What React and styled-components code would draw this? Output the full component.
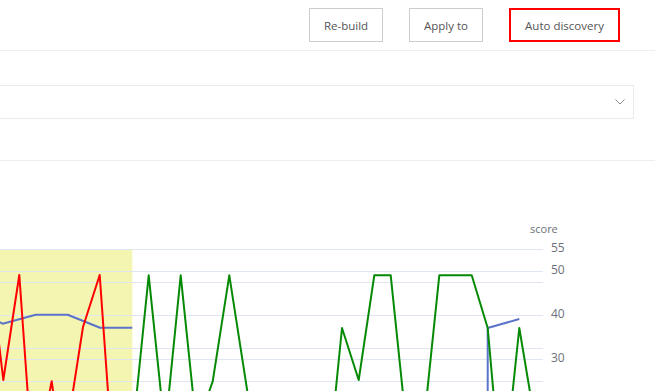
import React from 'react';
import styled, { createGlobalStyle } from 'styled-components';

const GlobalStyle = createGlobalStyle`
  html, body {
    margin: 0;
    padding: 0;
    background: #fff;
    overflow: hidden;
  }
  body {
    font-family: "Open Sans", "Liberation Sans", sans-serif;
    color: #555;
  }
`;

const Page = styled.div`
  width: 655px;
  height: 391px;
  overflow: hidden;
`;

const Toolbar = styled.div`
  height: 50px;
  display: flex;
  align-items: center;
  justify-content: flex-end;
  gap: 26px;
  padding-right: 35px;
  border-bottom: 1px solid #eeeeee;
`;

const Button = styled.button`
  box-sizing: border-box;
  width: ${p => p.$width}px;
  height: 34px;
  padding: 0;
  background: #fff;
  font-family: "Open Sans", "Liberation Sans", sans-serif;
  font-size: 11.5px;
  font-weight: 400;
  color: #555;
  cursor: pointer;
  border: ${p => (p.$highlight ? '2px solid #ff0000' : '1px solid #cccccc')};
  border-radius: 0;
`;

const FilterSection = styled.div`
  padding: 34px 21px 41px 0;
  border-bottom: 1px solid #eeeeee;
`;

const Select = styled.div`
  height: 32px;
  margin-left: -1px;
  border: 1px solid #eaeaea;
  display: flex;
  align-items: center;
  justify-content: flex-end;
  padding-right: 8px;
`;

const ChartWrap = styled.div`
  height: 230px;
`;

const gridYs = [249, 271, 282, 315, 348, 359, 381];

const red = [
  [-4, 318], [3.3, 380], [19.3, 275], [30, 425], [43, 425], [51.7, 381.3],
  [57, 420], [68.5, 420], [83, 327], [99.7, 275], [110, 420],
];

const blueA = [
  [-5, 320], [2.7, 323.7], [35.7, 314.7], [67.7, 314.7], [100, 327.7], [132.3, 327.7],
];

const blueB = [[487.7, 420], [487.7, 328], [519.3, 319]];

const green = [
  [134, 420], [148.7, 275.3], [165, 432], [180.7, 275.3], [196.5, 427.6],
  [212.7, 381.3], [229.3, 275.3], [254.9, 440], [330.8, 440], [342, 328],
  [358.7, 380], [374.3, 275.3], [390.7, 275.3], [405.2, 415], [424.8, 415],
  [439.3, 275.3], [471.7, 275.3], [487.7, 328], [495, 410], [510.7, 410],
  [519.3, 328], [533, 410],
];

const pts = arr => arr.map(p => p.join(',')).join(' ');

const axisLabels = [
  { v: '55', y: 252 },
  { v: '50', y: 274 },
  { v: '40', y: 318 },
  { v: '30', y: 362 },
];

function ScoreChart() {
  return (
    <svg width="655" height="230" viewBox="0 161 655 230">
      <rect x="-2" y="249" width="134.3" height="150" fill="#f3f5b0" />
      {gridYs.map(y => (
        <line key={y} x1="0" x2="543" y1={y + 0.5} y2={y + 0.5} stroke="#e0e6f1" strokeWidth="1" />
      ))}
      <polyline points={pts(blueA)} fill="none" stroke="#5b73c9" strokeWidth="2" strokeLinejoin="round" />
      <polyline points={pts(blueB)} fill="none" stroke="#5b73c9" strokeWidth="2" strokeLinejoin="round" />
      <polyline points={pts(red)} fill="none" stroke="#ff0000" strokeWidth="2" strokeLinejoin="round" />
      <polyline points={pts(green)} fill="none" stroke="#068a06" strokeWidth="2" strokeLinejoin="round" />
      <text x="530" y="233" fontSize="11" fill="#6e7079" fontFamily="Open Sans, Liberation Sans, sans-serif">score</text>
      {axisLabels.map(a => (
        <text key={a.v} x="551" y={a.y} fontSize="12" fill="#6e7079" fontFamily="Open Sans, Liberation Sans, sans-serif">{a.v}</text>
      ))}
    </svg>
  );
}

export default function App() {
  return (
    <>
      <GlobalStyle />
      <Page>
        <Toolbar>
          <Button $width={74}>Re-build</Button>
          <Button $width={74}>Apply to</Button>
          <Button $width={111} $highlight>Auto discovery</Button>
        </Toolbar>
        <FilterSection>
          <Select>
            <svg width="10" height="6" viewBox="0 0 10 6">
              <polyline points="0.5,0.5 5,5 9.5,0.5" fill="none" stroke="#888" strokeWidth="1" />
            </svg>
          </Select>
        </FilterSection>
        <ChartWrap>
          <ScoreChart />
        </ChartWrap>
      </Page>
    </>
  );
}
